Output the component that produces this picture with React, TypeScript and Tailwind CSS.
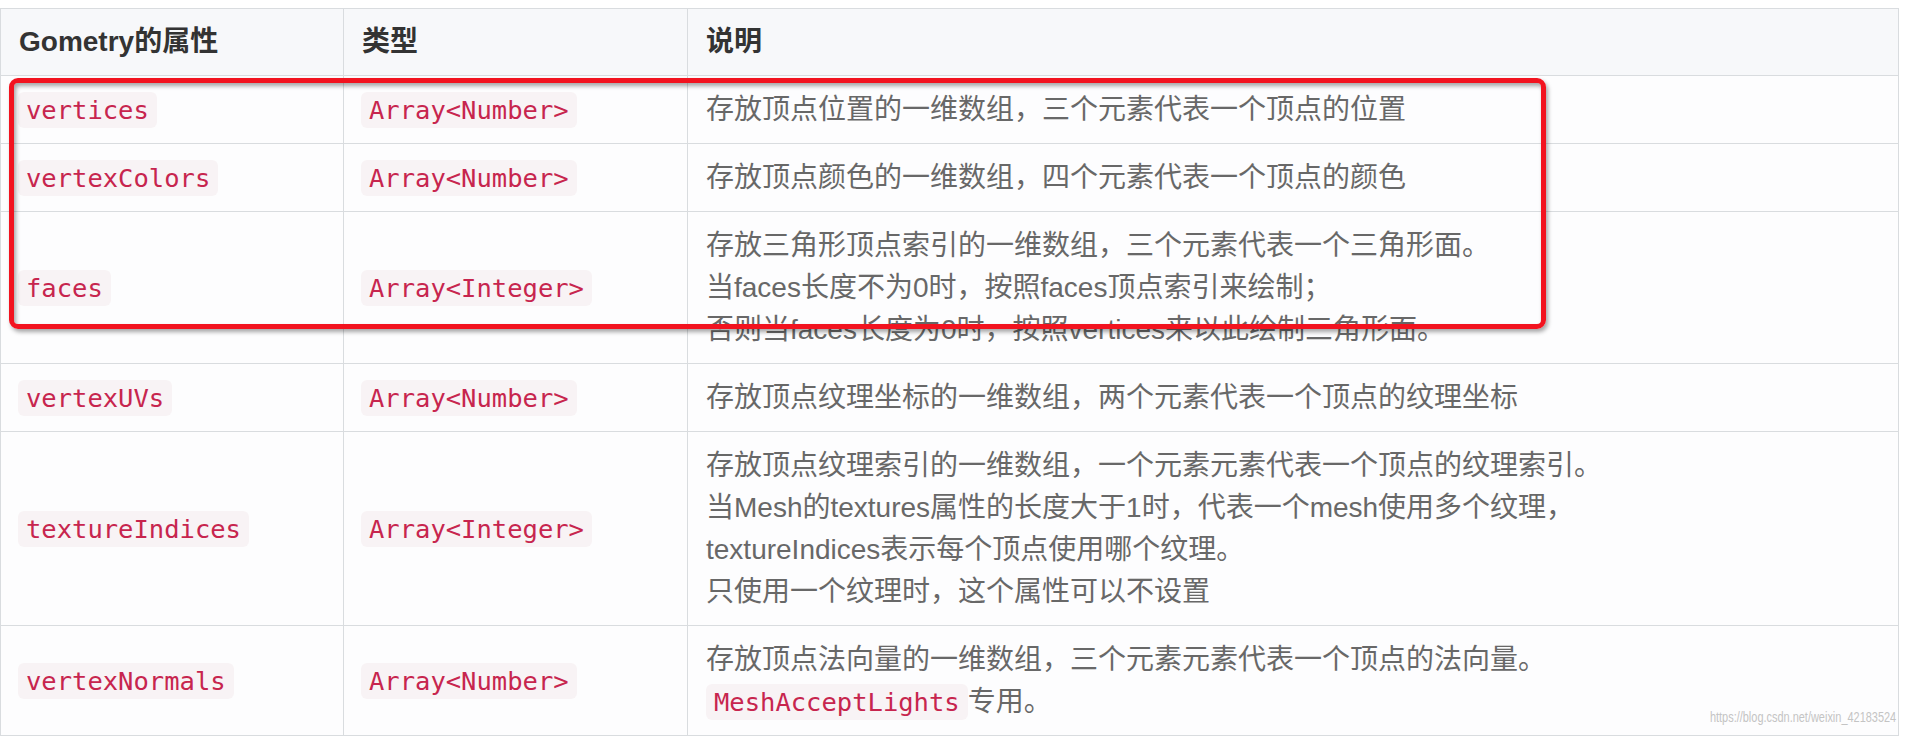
import React from "react";

const Code = ({ children }: { children: React.ReactNode }) => (
  <code className="font-['DejaVu_Sans_Mono',monospace] text-[25.5px] text-[#c7254e] bg-[#f8f3f5] rounded-[6px] px-[8px] py-[3px]">
    {children}
  </code>
);

type Row = { name: string; type: string; desc: React.ReactNode[] };

const rows: Row[] = [
  { name: "vertices", type: "Array<Number>", desc: ["存放顶点位置的一维数组，三个元素代表一个顶点的位置"] },
  { name: "vertexColors", type: "Array<Number>", desc: ["存放顶点颜色的一维数组，四个元素代表一个顶点的颜色"] },
  {
    name: "faces",
    type: "Array<Integer>",
    desc: [
      "存放三角形顶点索引的一维数组，三个元素代表一个三角形面。",
      "当faces长度不为0时，按照faces顶点索引来绘制；",
      "否则当faces长度为0时，按照vertices来以此绘制三角形面。",
    ],
  },
  { name: "vertexUVs", type: "Array<Number>", desc: ["存放顶点纹理坐标的一维数组，两个元素代表一个顶点的纹理坐标"] },
  {
    name: "textureIndices",
    type: "Array<Integer>",
    desc: [
      "存放顶点纹理索引的一维数组，一个元素元素代表一个顶点的纹理索引。",
      "当Mesh的textures属性的长度大于1时，代表一个mesh使用多个纹理，",
      "textureIndices表示每个顶点使用哪个纹理。",
      "只使用一个纹理时，这个属性可以不设置",
    ],
  },
  {
    name: "vertexNormals",
    type: "Array<Number>",
    desc: [
      "存放顶点法向量的一维数组，三个元素元素代表一个顶点的法向量。",
      <span key="m">
        <Code>MeshAcceptLights</Code>专用。
      </span>,
    ],
  },
];

export default function App() {
  return (
    <div className="relative h-[736px] w-[1920px] overflow-hidden bg-white font-['Liberation_Sans','Noto_Sans_CJK_SC',sans-serif]">
      <table className="mt-[8px] w-[1899px] table-fixed border-collapse text-[28px] leading-[42px]">
        <colgroup>
          <col className="w-[343px]" />
          <col className="w-[344px]" />
          <col />
        </colgroup>
        <thead>
          <tr className="bg-[#f7f8fa]">
            <th className="border border-[#d9dcdf] px-[18px] py-[12px] text-left font-bold text-[#333]">Gometry的属性</th>
            <th className="border border-[#d9dcdf] px-[18px] py-[12px] text-left font-bold text-[#333]">类型</th>
            <th className="border border-[#d9dcdf] px-[18px] py-[12px] text-left font-bold text-[#333]">说明</th>
          </tr>
        </thead>
        <tbody>
          {rows.map((r) => (
            <tr key={r.name} className="bg-[#fdfdfe]">
              <td className="border border-[#d9dcdf] px-[17px] py-[12.5px] align-middle">
                <Code>{r.name}</Code>
              </td>
              <td className="border border-[#d9dcdf] px-[17px] py-[12.5px] align-middle">
                <Code>{r.type}</Code>
              </td>
              <td className="border border-[#d9dcdf] px-[18px] py-[12.5px] align-middle text-[#686868]">
                {r.desc.map((d, i) => (
                  <div key={i}>{d}</div>
                ))}
              </td>
            </tr>
          ))}
        </tbody>
      </table>

      <div className="pointer-events-none absolute left-[9px] top-[78px] h-[251px] w-[1537px] rounded-[9px] border-[5px] border-[#f2131f] shadow-[2px_3px_4px_rgba(0,0,0,0.35),inset_2px_3px_4px_rgba(0,0,0,0.35)]" />

      <div className="pointer-events-none absolute right-[24px] top-[707px] origin-right scale-x-[0.73] whitespace-nowrap text-[15px] leading-[20px] text-[#c4c4c4] [text-shadow:0_0_1px_#fff]">
        https://blog.csdn.net/weixin_42183524
      </div>
    </div>
  );
}
